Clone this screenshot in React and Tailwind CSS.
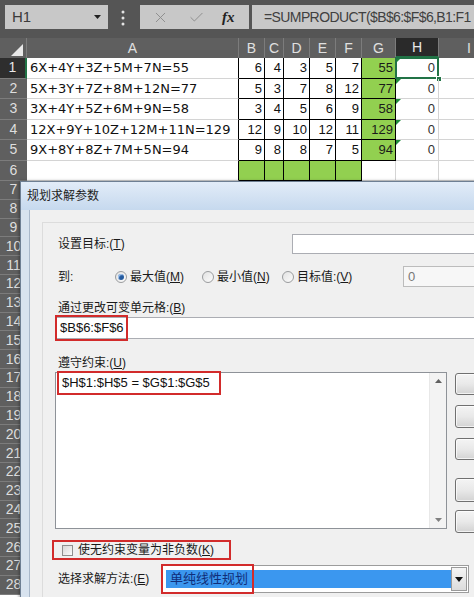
import React from 'react';
import { X, Check } from 'lucide-react';

const DATA = [
  ['6X+4Y+3Z+5M+7N=55', 6, 4, 3, 5, 7, 55, 0],
  ['5X+3Y+7Z+8M+12N=77', 5, 3, 7, 8, 12, 77, 0],
  ['3X+4Y+5Z+6M+9N=58', 3, 4, 5, 6, 9, 58, 0],
  ['12X+9Y+10Z+12M+11N=129', 12, 9, 10, 12, 11, 129, 0],
  ['9X+8Y+8Z+7M+5N=94', 9, 8, 8, 7, 5, 94, 0],
  null,
];
const W = ['w-[212px]', 'w-[26px]', 'w-[19px]', 'w-[26px]', 'w-[26px]', 'w-[26px]', 'w-[34px]', 'w-[43px]'];
const LETTERS = ['A', 'B', 'C', 'D', 'E', 'F', 'G', 'H'];
const GREEN = 'bg-[#92d050]';

function RowHead({ n, active }) {
  return (
    <div
      className={
        'w-[27px] shrink-0 h-full flex items-center justify-center text-[14px] border-b border-b-[#7c7c7c] ' +
        (active
          ? 'bg-[#2e2e2e] text-[#e8e8e8] border-r-2 border-r-[#217346]'
          : 'bg-[#5f5f5f] text-[#dedede]')
      }
    >
      {n}
    </div>
  );
}

function DataRow({ n, row }) {
  const isLast = row === null;
  return (
    <div className="flex h-[20.5px]">
      <RowHead n={n} active={n === 1} />
      <div className={`${W[0]} shrink-0 h-full border-r border-b border-r-black border-b-[#d4d4d4] flex items-center pl-[3px] text-[13px] text-[#111] font-['DejaVu_Sans',sans-serif] whitespace-nowrap`}>
        {row ? row[0] : ''}
      </div>
      {[1, 2, 3, 4, 5].map((i) => (
        <div
          key={i}
          className={`${W[i]} shrink-0 h-full border-r border-b border-r-black border-b-black flex items-center justify-end pr-[2px] text-[13px] text-[#111] ${isLast ? GREEN : 'bg-white'}`}
        >
          {row ? row[i] : ''}
        </div>
      ))}
      <div
        className={
          `${W[6]} shrink-0 h-full border-r border-b flex items-center justify-end pr-[2px] text-[13px] text-[#1a1a1a] ` +
          (isLast ? 'border-r-[#d4d4d4] border-b-[#d4d4d4] bg-white' : `border-r-black border-b-black ${GREEN}`)
        }
      >
        {row ? row[6] : ''}
      </div>
      <div className={`${W[7]} shrink-0 h-full relative border-r border-b border-r-[#d4d4d4] border-b-[#d4d4d4] flex items-center justify-end pr-[3px] text-[13px] text-[#333]`}>
        {row ? row[7] : ''}
        {row && (
          <span className="absolute left-0 top-0 w-0 h-0 border-t-[5px] border-r-[5px] border-t-[#1e8c3a] border-r-transparent" />
        )}
        {n === 1 && (
          <>
            <span className="absolute -left-[1px] -top-[1px] right-[-1px] bottom-[-1px] border-2 border-[#217346]" />
            <span className="absolute right-[-4px] bottom-[-4px] w-[6px] h-[6px] bg-[#217346] border border-white" />
          </>
        )}
      </div>
      <div className="flex-1 h-full border-b border-b-[#d4d4d4] bg-white" />
    </div>
  );
}

function EmptyRow({ n }) {
  return (
    <div className="flex h-[18.8px]">
      <RowHead n={n} />
      <div className="flex-1 h-full border-b border-b-[#d4d4d4] bg-white" />
    </div>
  );
}

function Radio({ on }) {
  return (
    <span className="w-[12px] h-[12px] shrink-0 rounded-full border border-[#9a9c9e] bg-gradient-to-br from-[#e2e2e2] to-[#fcfcfc] flex items-center justify-center">
      {on && <span className="w-[6px] h-[6px] rounded-full bg-[#245a9e] shadow-[inset_1px_1px_1px_rgba(190,220,255,0.9)]" />}
    </span>
  );
}

function Btn() {
  return (
    <div className="w-[80px] rounded-[3px] border border-[#707070] bg-gradient-to-b from-[#f4f4f4] via-[#e9e9e9] to-[#d3d3d3] shadow-[inset_0_0_0_1px_rgba(255,255,255,0.7)]" />
  );
}

export default function App() {
  const emptyRows = [];
  for (let i = 7; i <= 28; i++) emptyRows.push(i);
  return (
    <div className="relative w-[474px] h-[597px] overflow-hidden bg-white font-['Liberation_Sans','Noto_Sans_CJK_SC',sans-serif]">
      {/* Top bar */}
      <div className="h-[38px] bg-[#555555] flex items-start pt-[5px]">
        <div className="ml-[5px] w-[103px] h-[24px] bg-[#c8c8c8] flex items-center pl-[7px] text-[15px] text-[#3b3b3b]">
          H1
          <svg className="ml-auto mr-[7px]" width="7" height="5" viewBox="0 0 7 5">
            <polygon points="0,0 7,0 3.5,4" fill="#222" />
          </svg>
        </div>
        <svg className="ml-[13px] mt-[5px]" width="4" height="16" viewBox="0 0 4 16">
          <circle cx="2" cy="2" r="1.5" fill="#e4e4e4" />
          <circle cx="2" cy="8" r="1.5" fill="#e4e4e4" />
          <circle cx="2" cy="14" r="1.5" fill="#e4e4e4" />
        </svg>
        <div className="ml-[15px] w-[109px] h-[24px] bg-[#c8c8c8] flex items-center">
          <X className="ml-[12px]" size={17} strokeWidth={1.3} color="#8a8a8a" />
          <Check className="ml-[19px]" size={17} strokeWidth={1.3} color="#8a8a8a" />
          <span className="ml-[17px] text-[15px] italic font-bold text-[#222] font-['Liberation_Serif',serif]">fx</span>
        </div>
        <div className="ml-[3px] flex-1 h-[24px] bg-[#c8c8c8] flex items-center pl-[12px] text-[14px] tracking-[-0.6px] text-[#404040] whitespace-nowrap overflow-hidden">
          =SUMPRODUCT($B$6:$F$6,B1:F1
        </div>
      </div>

      {/* Column headers */}
      <div className="flex h-[20px] bg-[#5f5f5f]">
        <div className="w-[27px] shrink-0 h-full relative border-r border-r-[#7c7c7c]">
          <svg className="absolute right-[3px] bottom-[2px]" width="12" height="12" viewBox="0 0 12 12">
            <polygon points="12,0 12,12 0,12" fill="#e8e8e8" />
          </svg>
        </div>
        {LETTERS.map((l, i) => (
          <div
            key={l}
            className={
              `${W[i]} shrink-0 h-full flex items-center justify-center text-[14px] border-r border-r-[#7c7c7c] ` +
              (l === 'H' ? 'bg-[#2a2a2a] text-[#e8e8e8] border-b-2 border-b-[#217346]' : 'text-[#e0e0e0]')
            }
          >
            {l}
          </div>
        ))}
        <div className="flex-1 h-full flex items-center pl-[28px] text-[14px] text-[#e0e0e0]">I</div>
      </div>

      {/* Grid */}
      <div className="flex flex-col">
        {DATA.map((row, i) => (
          <DataRow key={i} n={i + 1} row={row} />
        ))}
        {emptyRows.map((n) => (
          <EmptyRow key={n} n={n} />
        ))}
      </div>

      {/* Solver dialog */}
      <div className="absolute left-[20px] top-[181px] w-[480px] h-[440px] border-l border-t border-[#6e7f93] bg-[#d6e3f1] text-[#1a1a1a] text-[12px] shadow-[-1px_0_3px_rgba(0,0,0,0.35)]">
        <div className="h-[28px] flex items-center pl-[6px] bg-gradient-to-b from-[#e2ecf8] to-[#c6d9ee] text-[12px] text-[#1e1e1e]">
          规划求解参数
        </div>
        <div className="flex h-[420px]">
          <div className="w-[9px] shrink-0 bg-[#d8e3ef] border-r border-r-[#a9b8ca]" />
          <div className="flex-1 bg-[#f0f0f0] pl-[12px] pt-[12px]">
            <div className="h-full border-l border-t border-[#dcdcdc] pl-[12px] flex flex-col">
              {/* Set objective */}
              <div className="mt-[11px] h-[20px] flex items-center">
                <div className="w-[237px] shrink-0 pl-[3px]">
                  设置目标:(<span className="underline">T</span>)
                </div>
                <div className="w-[200px] h-[20px] border border-[#abadb3] bg-white" />
              </div>
              {/* To */}
              <div className="mt-[12px] h-[21px] flex items-center">
                <div className="w-[60px] shrink-0 pl-[3px]">到:</div>
                <div className="w-[87px] shrink-0 flex items-center gap-[3px]">
                  <Radio on />
                  <span>
                    最大值(<span className="underline">M</span>)
                  </span>
                </div>
                <div className="w-[80px] shrink-0 flex items-center gap-[3px]">
                  <Radio />
                  <span>
                    最小值(<span className="underline">N</span>)
                  </span>
                </div>
                <div className="w-[121px] shrink-0 flex items-center gap-[3px]">
                  <Radio />
                  <span>
                    目标值:(<span className="underline">V</span>)
                  </span>
                </div>
                <div className="w-[90px] h-[21px] border border-[#bcbcbc] bg-[#f7f7f7] flex items-center pl-[4px] text-[13px] text-[#777]">
                  0
                </div>
              </div>
              {/* Changing cells */}
              <div className="mt-[12px] h-[17px] flex items-center pl-[3px]">
                通过更改可变单元格:(<span className="underline">B</span>)
              </div>
              <div className="mt-[1px] h-[22px] w-[440px] border border-[#abadb3] bg-white flex items-center">
                <div className="-ml-[1px] h-[26px] w-[73px] shrink-0 border-2 border-[#d22b2b] flex items-center pl-[3px] text-[13px] text-[#111]">
                  $B$6:$F$6
                </div>
              </div>
              {/* Constraints */}
              <div className="mt-[15px] h-[17px] flex items-center pl-[3px]">
                遵守约束:(<span className="underline">U</span>)
              </div>
              <div className="mt-[1px] flex items-start">
                <div className="w-[392px] h-[157px] shrink-0 border border-[#8e9298] bg-white flex">
                  <div className="flex-1">
                    <div className="-mt-[2px] ml-[1px] w-[164px] h-[24px] border-2 border-[#d22b2b] flex items-center pl-[3px] text-[13px] text-[#111] whitespace-nowrap">
                      $H$1:$H$5 = $G$1:$G$5
                    </div>
                  </div>
                  <div className="w-[17px] h-full bg-[#f3f3f3] border-l border-l-[#e8e8e8] flex flex-col items-center justify-between py-[6px]">
                    <svg width="7" height="4" viewBox="0 0 7 4">
                      <polygon points="0,4 7,4 3.5,0" fill="#606060" />
                    </svg>
                    <svg width="7" height="4" viewBox="0 0 7 4">
                      <polygon points="0,0 7,0 3.5,4" fill="#808080" />
                    </svg>
                  </div>
                </div>
                <div className="ml-[8px] flex flex-col">
                  <div className="mt-[1px] h-[22px] flex"><Btn /></div>
                  <div className="mt-[10px] h-[23px] flex"><Btn /></div>
                  <div className="mt-[10px] h-[22px] flex"><Btn /></div>
                  <div className="mt-[18px] h-[24px] flex"><Btn /></div>
                  <div className="mt-[8px] h-[23px] flex"><Btn /></div>
                </div>
              </div>
              {/* Checkbox */}
              <div className="-ml-[3px] mt-[7px] w-[179px] h-[20px] shrink-0 border-2 border-[#d22b2b] flex items-center pl-[8px]">
                <span className="w-[11px] h-[11px] shrink-0 border border-[#8f8f8f] bg-gradient-to-br from-[#d8d8d8] to-[#fbfbfb]" />
                <span className="ml-[5px] whitespace-nowrap">
                  使无约束变量为非负数(<span className="underline">K</span>)
                </span>
              </div>
              {/* Method */}
              <div className="mt-[5px] h-[28px] flex items-center">
                <div className="w-[107px] shrink-0 pl-[3px] whitespace-nowrap">
                  选择求解方法:(<span className="underline">E</span>)
                </div>
                <div className="relative w-[307px] h-[28px] shrink-0 border border-[#9c9c9c] bg-white flex items-center">
                  <div className="ml-[3px] w-[285px] h-[18px] bg-[#3b97ef] flex items-center pl-[4px] text-[13px] text-[#102e7a] whitespace-nowrap">
                    单纯线性规划
                  </div>
                  <div className="ml-auto mr-[1px] w-[16px] h-[24px] border border-[#9a9a9a] bg-gradient-to-b from-[#f5f5f5] to-[#dcdcdc] flex items-center justify-center">
                    <svg width="8" height="5" viewBox="0 0 8 5">
                      <polygon points="0,0 8,0 4,5" fill="#111" />
                    </svg>
                  </div>
                  <div className="absolute -left-[2px] -top-[2px] w-[93px] h-[30px] border-2 border-[#d22b2b]" />
                </div>
              </div>
            </div>
          </div>
        </div>
      </div>
    </div>
  );
}
